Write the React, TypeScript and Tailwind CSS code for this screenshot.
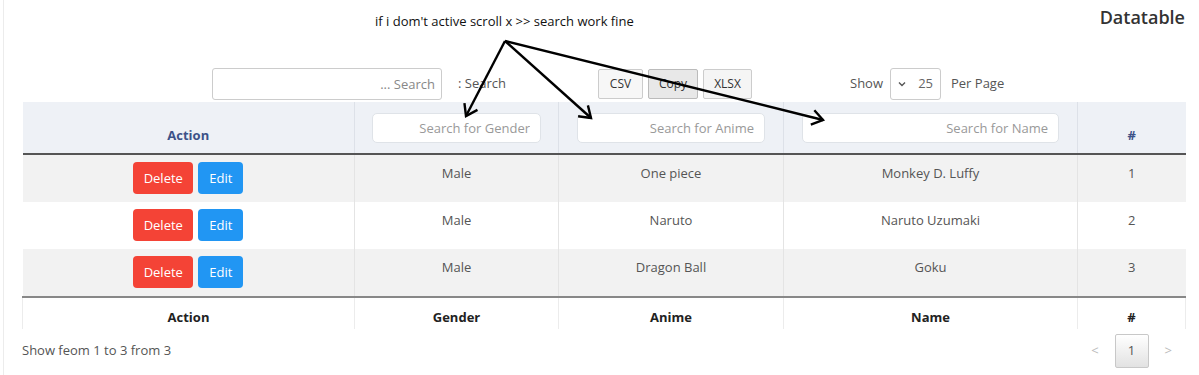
import React from "react";

const filas = [
  { id: 1, genero: "Male", anime: "One piece", nombre: "Monkey D. Luffy" },
  { id: 2, genero: "Male", anime: "Naruto", nombre: "Naruto Uzumaki" },
  { id: 3, genero: "Male", anime: "Dragon Ball", nombre: "Goku" },
];

// flecha: linea desde el origen hasta la punta, con dos "barbas"
function Flecha({ x1, y1, x2, y2 }: { x1: number; y1: number; x2: number; y2: number }) {
  const ang = Math.atan2(y2 - y1, x2 - x1);
  const largo = 13;
  const abre = 0.6;
  const a = [x2 - largo * Math.cos(ang - abre), y2 - largo * Math.sin(ang - abre)];
  const b = [x2 - largo * Math.cos(ang + abre), y2 - largo * Math.sin(ang + abre)];
  return (
    <>
      <line x1={x1} y1={y1} x2={x2} y2={y2} stroke="#000" strokeWidth="2.4" />
      <polyline
        points={`${a[0]},${a[1]} ${x2},${y2} ${b[0]},${b[1]}`}
        fill="none"
        stroke="#000"
        strokeWidth="2.4"
        strokeLinejoin="miter"
      />
    </>
  );
}

export default function App() {
  return (
    <div className="relative w-[1199px] h-[375px] overflow-hidden bg-white font-['Open_Sans',sans-serif]">
      <div className="ml-[3px] h-full border-l border-[#ececec] pl-[18px] pr-[14px]">
        {/* Titulo */}
        <div className="flex justify-end pt-[4px]">
          <h2 className="text-[18px] leading-[26px] font-semibold text-[#333]">Datatable</h2>
        </div>

        {/* Barra de herramientas */}
        <div className="mt-[38px] h-[32px] flex items-center text-[13px] text-[#555]">
          <input
            placeholder="... Search"
            className="ml-[190px] w-[230px] h-[32px] border border-[#ccc] rounded-[3px] text-right px-[6px] text-[13px] placeholder:text-[#888] outline-none"
          />
          <span className="w-[156px] pl-[16px]">: Search</span>
          <div className="flex gap-[5px] text-[12px] text-[#333]">
            <button className="w-[45px] h-[30px] border border-[#ccc] rounded-[2px] bg-[#f7f7f7]">CSV</button>
            <button className="w-[50px] h-[30px] border border-[#bbb] rounded-[2px] bg-[#e8e8e8]">Copy</button>
            <button className="w-[49px] h-[30px] border border-[#ccc] rounded-[2px] bg-[#f5f5f5]">XLSX</button>
          </div>
          <span className="ml-[98px]">Show</span>
          <div className="ml-[7px] w-[51px] h-[32px] border border-[#ccc] rounded-[3px] flex items-center justify-between px-[7px]">
            <svg width="8" height="6" viewBox="0 0 8 6">
              <path d="M1 1.5 L4 4.5 L7 1.5" fill="none" stroke="#555" strokeWidth="1.4" />
            </svg>
            <span className="text-[#666]">25</span>
          </div>
          <span className="ml-[10px]">Per Page</span>
        </div>

        {/* Tabla */}
        <table className="mt-[2px] w-[1163px] table-fixed border-collapse text-[13px]">
          <colgroup>
            <col className="w-[332px]" />
            <col className="w-[204px]" />
            <col className="w-[225px]" />
            <col className="w-[294px]" />
            <col className="w-[108px]" />
          </colgroup>
          <thead>
            <tr className="bg-[#eef1f6] h-[52px] border-b-2 border-[#555]">
              <th className="align-bottom pb-[8px] leading-5 font-bold text-[#3d5288] border-r border-[#dde1e8]">Action</th>
              <th className="align-bottom pb-[10px] px-[17px] border-r border-[#dde1e8]">
                <input placeholder="Search for Gender" className="w-full h-[30px] bg-white border border-[#dfe3e8] rounded-[5px] text-right px-[10px] font-normal placeholder:text-[#999] outline-none" />
              </th>
              <th className="align-bottom pb-[10px] px-[18px] border-r border-[#dde1e8]">
                <input placeholder="Search for Anime" className="w-full h-[30px] bg-white border border-[#dfe3e8] rounded-[5px] text-right px-[10px] font-normal placeholder:text-[#999] outline-none" />
              </th>
              <th className="align-bottom pb-[10px] px-[18px] border-r border-[#dde1e8]">
                <input placeholder="Search for Name" className="w-full h-[30px] bg-white border border-[#dfe3e8] rounded-[5px] text-right px-[10px] font-normal placeholder:text-[#999] outline-none" />
              </th>
              <th className="align-bottom pb-[8px] leading-5 font-bold text-[#3d5288]">#</th>
            </tr>
          </thead>
          <tbody className="text-[#555]">
            {filas.map((f, i) => (
              <tr key={f.id} className={`h-[47.5px] ${i % 2 === 0 ? "bg-[#f2f2f2]" : "bg-white"}`}>
                <td className="align-middle border-r border-[#e4e4e4]">
                  <div className="flex justify-center gap-[5px]">
                    <button className="w-[60px] h-[32px] rounded-[4px] bg-[#f44336] text-white">Delete</button>
                    <button className="w-[45px] h-[32px] rounded-[4px] bg-[#2196f3] text-white">Edit</button>
                  </div>
                </td>
                <td className="align-top pt-[8px] leading-5 text-center border-r border-[#e4e4e4]">{f.genero}</td>
                <td className="align-top pt-[8px] leading-5 text-center border-r border-[#e4e4e4]">{f.anime}</td>
                <td className="align-top pt-[8px] leading-5 text-center border-r border-[#e4e4e4]">{f.nombre}</td>
                <td className="align-top pt-[8px] leading-5 text-center">{f.id}</td>
              </tr>
            ))}
          </tbody>
          <tfoot>
            <tr className="h-[32px] border-t-2 border-[#888] font-bold text-[#222]">
              <td className="align-top pt-[9px] leading-5 text-center border-l border-r border-[#ececec]">Action</td>
              <td className="align-top pt-[9px] leading-5 text-center border-r border-[#ececec]">Gender</td>
              <td className="align-top pt-[9px] leading-5 text-center border-r border-[#ececec]">Anime</td>
              <td className="align-top pt-[9px] leading-5 text-center border-r border-[#ececec]">Name</td>
              <td className="align-top pt-[9px] leading-5 text-center border-r border-[#ececec]">#</td>
            </tr>
          </tfoot>
        </table>

        {/* Pie */}
        <div className="mt-[5px] h-[34px] flex items-center justify-between text-[13px] text-[#555]">
          <span>Show feom 1 to 3 from 3</span>
          <div className="flex items-center gap-[16px] mr-[13px] text-[#bbb]">
            <span>&lt;</span>
            <span className="w-[34px] h-[34px] flex items-center justify-center border border-[#c8c8c8] rounded-[2px] bg-gradient-to-b from-white to-[#e2e2e2] text-[#555]">1</span>
            <span>&gt;</span>
          </div>
        </div>
      </div>

      {/* Anotacion encima */}
      <p className="absolute left-[375px] top-[12px] text-[13px] leading-[18px] text-[#111]">
        if i dom't active scroll x &gt;&gt; search work fine
      </p>
      <svg className="absolute left-0 top-0 pointer-events-none" width="1199" height="375">
        <Flecha x1={505} y1={41} x2={466} y2={116} />
        <Flecha x1={505} y1={41} x2={591} y2={118} />
        <Flecha x1={505} y1={41} x2={823} y2={120} />
      </svg>
    </div>
  );
}
